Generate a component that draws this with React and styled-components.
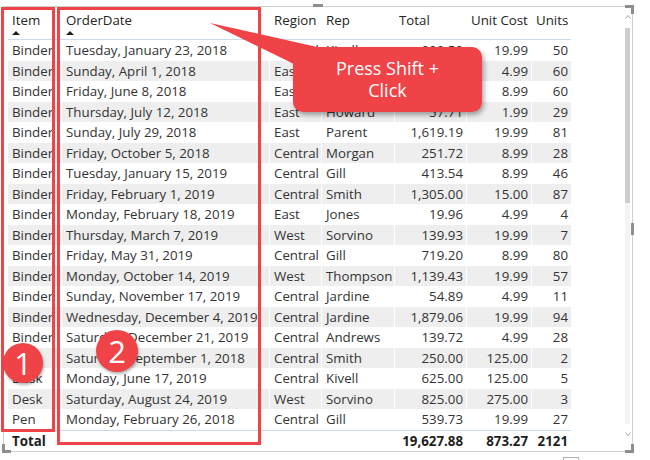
import React from 'react';
import styled, { createGlobalStyle, css } from 'styled-components';

const GlobalStyle = createGlobalStyle`
  body {
    margin: 0;
    background: #fff;
    font-family: "Open Sans", "Liberation Sans", sans-serif;
  }
`;

const RED = '#f04347';
const LINE = '#c9dbef';
const HANDLE = '#8e8e8e';
const COLS = '53px 207px 51px 72px 71px 64px 39px';

const rows = [
  ['Binder', 'Tuesday, January 23, 2018', 'Central', 'Kivell', '999.50', '19.99', '50'],
  ['Binder', 'Sunday, April 1, 2018', 'East', 'Jones', '299.40', '4.99', '60'],
  ['Binder', 'Friday, June 8, 2018', 'East', 'Jones', '539.40', '8.99', '60'],
  ['Binder', 'Thursday, July 12, 2018', 'East', 'Howard', '57.71', '1.99', '29'],
  ['Binder', 'Sunday, July 29, 2018', 'East', 'Parent', '1,619.19', '19.99', '81'],
  ['Binder', 'Friday, October 5, 2018', 'Central', 'Morgan', '251.72', '8.99', '28'],
  ['Binder', 'Tuesday, January 15, 2019', 'Central', 'Gill', '413.54', '8.99', '46'],
  ['Binder', 'Friday, February 1, 2019', 'Central', 'Smith', '1,305.00', '15.00', '87'],
  ['Binder', 'Monday, February 18, 2019', 'East', 'Jones', '19.96', '4.99', '4'],
  ['Binder', 'Thursday, March 7, 2019', 'West', 'Sorvino', '139.93', '19.99', '7'],
  ['Binder', 'Friday, May 31, 2019', 'Central', 'Gill', '719.20', '8.99', '80'],
  ['Binder', 'Monday, October 14, 2019', 'West', 'Thompson', '1,139.43', '19.99', '57'],
  ['Binder', 'Sunday, November 17, 2019', 'Central', 'Jardine', '54.89', '4.99', '11'],
  ['Binder', 'Wednesday, December 4, 2019', 'Central', 'Jardine', '1,879.06', '19.99', '94'],
  ['Binder', 'Saturday, December 21, 2019', 'Central', 'Andrews', '139.72', '4.99', '28'],
  ['Desk', 'Saturday, September 1, 2018', 'Central', 'Smith', '250.00', '125.00', '2'],
  ['Desk', 'Monday, June 17, 2019', 'Central', 'Kivell', '625.00', '125.00', '5'],
  ['Desk', 'Saturday, August 24, 2019', 'West', 'Sorvino', '825.00', '275.00', '3'],
  ['Pen', 'Monday, February 26, 2018', 'Central', 'Gill', '539.73', '19.99', '27'],
];

const headers = [
  { label: 'Item', sorted: true },
  { label: 'OrderDate', sorted: true },
  { label: 'Region' },
  { label: 'Rep' },
  { label: 'Total' },
  { label: 'Unit Cost' },
  { label: 'Units' },
];

const Page = styled.div`
  position: relative;
  width: 650px;
  height: 460px;
  padding: 6px 0 0 3px;
  box-sizing: border-box;
  overflow: hidden;
`;

const Visual = styled.div`
  position: relative;
  display: flex;
  width: 630px;
  height: 446px;
  box-sizing: border-box;
  border: 1px solid #cfcfcf;
`;

const TableWrap = styled.div`
  flex: 1;
  padding-left: 4px;
  color: #333;
  font-size: 13.3px;
`;

const HeaderRow = styled.div`
  display: grid;
  grid-template-columns: ${COLS};
  column-gap: 1px;
  width: 563px;
  height: 32px;
  border-bottom: 1px solid ${LINE};
`;

const HeaderCell = styled.div`
  padding: 4px 3px 0 4px;
  line-height: 18px;
  color: #252423;
  white-space: nowrap;
`;

const SortArrow = styled.div`
  width: 0;
  height: 0;
  margin-top: 2px;
  border-left: 4px solid transparent;
  border-right: 4px solid transparent;
  border-bottom: 4px solid #1e1e1e;
`;

const Row = styled.div`
  display: grid;
  grid-template-columns: ${COLS};
  column-gap: 1px;
  width: 563px;
  height: 20.5px;
  line-height: 20.5px;
  & > div {
    background: ${p => (p.$shaded ? '#eeeeee' : '#fff')};
  }
`;

const TotalRow = styled(Row)`
  height: 20px;
  line-height: 20px;
  border-top: 1px solid ${LINE};
  font-weight: 700;
  color: #1e1e1e;
`;

const Cell = styled.div`
  padding: 0 3px 0 4px;
  white-space: nowrap;
  overflow: hidden;
  text-align: ${p => (p.$num ? 'right' : 'left')};
`;

const Scroll = styled.div`
  width: 9px;
  display: flex;
  flex-direction: column;
  padding: 0 0 7px 2px;
  box-sizing: border-box;
`;

const ArrowBox = styled.div`
  width: 6px;
  height: 20px;
  display: flex;
  align-items: center;
  justify-content: center;
`;

const Track = styled.div`
  flex: 1;
  width: 5px;
  margin-top: 1px;
  background: #f4f4f4;
`;

const Thumb = styled.div`
  width: 5px;
  height: 175px;
  background: #cdcdcd;
`;

// selection corners of the visual
const cornerSides = {
  tr: css`top: -2px; right: -2px; border-top: 3px solid ${HANDLE}; border-right: 3px solid ${HANDLE};`,
  br: css`bottom: -2px; right: -2px; border-bottom: 3px solid ${HANDLE}; border-right: 3px solid ${HANDLE};`,
  bl: css`bottom: -2px; left: -2px; border-bottom: 3px solid ${HANDLE}; border-left: 3px solid ${HANDLE};`,
};

const Corner = styled.div`
  position: absolute;
  width: 6px;
  height: 6px;
  ${p => cornerSides[p.$at]}
`;

// mid-edge grab handles
const edgeSides = {
  top: css`top: -3px; left: calc(50% - 5px); width: 10px; height: 3px;`,
  left: css`left: -3px; top: calc(50% - 4px); width: 3px; height: 8px;`,
  right: css`right: -2px; top: calc(50% - 6px); width: 3px; height: 12px;`,
};

const Edge = styled.div`
  position: absolute;
  background: ${HANDLE};
  ${p => edgeSides[p.$at]}
`;

const MoreBox = styled.div`
  position: absolute;
  left: 563px;
  top: 457px;
  width: 14px;
  height: 8px;
  border: 1px solid #b0b0b0;
`;

const Frame = styled.div`
  position: absolute;
  left: ${p => p.$x}px;
  top: 7px;
  width: ${p => p.$w}px;
  height: ${p => p.$h}px;
  border: 3px solid ${RED};
  box-sizing: border-box;
`;

const Badge = styled.div`
  position: absolute;
  left: ${p => p.$x - p.$r}px;
  top: ${p => p.$y - p.$r}px;
  width: ${p => p.$r * 2}px;
  height: ${p => p.$r * 2}px;
  border-radius: 50%;
  background: ${RED};
  color: #fff;
  font-size: 31px;
  display: flex;
  align-items: center;
  justify-content: center;
  box-shadow: 1px 2px 3px rgba(0, 0, 0, 0.3);
`;

const Tail = styled.svg`
  position: absolute;
  left: 205px;
  top: 18px;
  overflow: visible;
`;

const Callout = styled.div`
  position: absolute;
  left: 293px;
  top: 47px;
  width: 189px;
  height: 65px;
  border-radius: 10px;
  background: ${RED};
  color: #fff;
  font-size: 18px;
  line-height: 21.5px;
  display: flex;
  align-items: center;
  justify-content: center;
  text-align: center;
  box-shadow: 2px 3px 5px rgba(0, 0, 0, 0.35);
`;

const Chevron = ({ down }) => (
  <svg width="6" height="4" viewBox="0 0 6 4">
    <polyline
      points={down ? '0.5,0.5 3,3.5 5.5,0.5' : '0.5,3.5 3,0.5 5.5,3.5'}
      fill="none"
      stroke="#a6a6a6"
      strokeWidth="1"
    />
  </svg>
);

const numeric = i => i >= 4;

export default function App() {
  return (
    <>
      <GlobalStyle />
      <Page>
        <Visual>
          <TableWrap>
            <HeaderRow>
              {headers.map(h => (
                <HeaderCell key={h.label}>
                  {h.label}
                  {h.sorted && <SortArrow />}
                </HeaderCell>
              ))}
            </HeaderRow>
            {rows.map((r, ri) => (
              <Row key={ri} $shaded={ri % 2 === 1}>
                {r.map((v, ci) => (
                  <Cell key={ci} $num={numeric(ci)}>{v}</Cell>
                ))}
              </Row>
            ))}
            <TotalRow>
              <Cell>Total</Cell>
              <Cell />
              <Cell />
              <Cell />
              <Cell $num>19,627.88</Cell>
              <Cell $num>873.27</Cell>
              <Cell $num>2121</Cell>
            </TotalRow>
          </TableWrap>
          <Scroll>
            <ArrowBox><Chevron /></ArrowBox>
            <Track><Thumb /></Track>
            <ArrowBox><Chevron down /></ArrowBox>
          </Scroll>

          <Corner $at="tr" />
          <Corner $at="br" />
          <Corner $at="bl" />
          <Edge $at="top" />
          <Edge $at="left" />
          <Edge $at="right" />
        </Visual>
        <MoreBox />

        <Frame $x={1} $w={54} $h={425} />
        <Frame $x={57} $w={204} $h={438} />

        <Tail width="112" height="50">
          <polygon points="5,5 112,29 89,46" fill={RED} />
        </Tail>
        <Callout>
          Press Shift +<br />Click
        </Callout>

        <Badge $x={23} $y={363} $r={20}>1</Badge>
        <Badge $x={117} $y={351} $r={21}>2</Badge>
      </Page>
    </>
  );
}
